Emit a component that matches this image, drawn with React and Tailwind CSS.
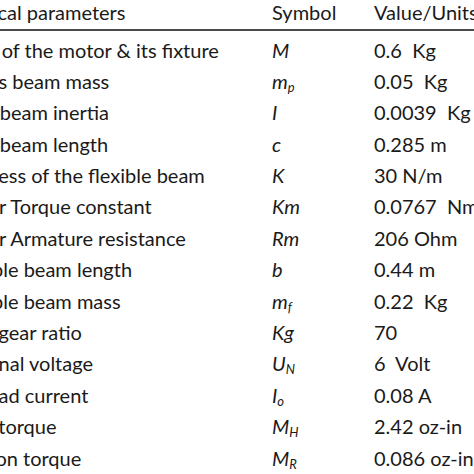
import React from "react";

const Sub = ({ children }) => (
  <span className="text-[13px] align-[-3px] leading-none">{children}</span>
);

const rows = [
  { p: "Mass of the motor & its fixture", s: <>M</>, v: "0.6\u00a0 Kg" },
  { p: "Rigid's beam mass", s: <>m<Sub>p</Sub></>, v: "0.05\u00a0 Kg" },
  { p: "Rigid beam inertia", s: <>I</>, v: "0.0039\u00a0 Kg m\u00b2" },
  { p: "Rigid beam length", s: <>c</>, v: "0.285 m" },
  { p: "Stiffness of the flexible beam", s: <>K</>, v: "30 N/m" },
  { p: "Motor Torque constant", s: <>Km</>, v: "0.0767\u00a0 Nm/A" },
  { p: "Motor Armature resistance", s: <>Rm</>, v: "206 Ohm" },
  { p: "Flexible beam length", s: <>b</>, v: "0.44 m" },
  { p: "Flexible beam mass", s: <>m<Sub>f</Sub></>, v: "0.22\u00a0 Kg" },
  { p: "Total gear ratio", s: <>Kg</>, v: "70" },
  { p: "Nominal voltage", s: <>U<Sub>N</Sub></>, v: "6\u00a0 Volt" },
  { p: "No load current", s: <>I<Sub>o</Sub></>, v: "0.08 A" },
  { p: "Peak torque", s: <>M<Sub>H</Sub></>, v: "2.42 oz-in" },
  { p: "Friction torque", s: <>M<Sub>R</Sub></>, v: "0.086 oz-in" },
];

export default function App() {
  return (
    <div
      className="w-[474px] h-[474px] overflow-hidden bg-white text-[#1a1a1a] text-[20px]"
      style={{ fontFamily: "Lato, 'Open Sans', sans-serif" }}
    >
      <div className="ml-[-49px] w-[600px] flex flex-col">
        <div className="grid grid-cols-[321px_102px_1fr] h-[29px] items-start leading-[24px] whitespace-nowrap">
          <div>Physical parameters</div>
          <div>Symbol</div>
          <div>Value/Units</div>
        </div>
        <div className="h-[1.5px] bg-[#4a4a4a]" />
        <div className="pt-[4px] flex flex-col">
          {rows.map((r, i) => (
            <div
              key={i}
              className="grid grid-cols-[321px_102px_1fr] h-[31.4px] leading-[31.4px] whitespace-nowrap"
            >
              <div>{r.p}</div>
              <div className="italic">{r.s}</div>
              <div>{r.v}</div>
            </div>
          ))}
        </div>
      </div>
    </div>
  );
}
